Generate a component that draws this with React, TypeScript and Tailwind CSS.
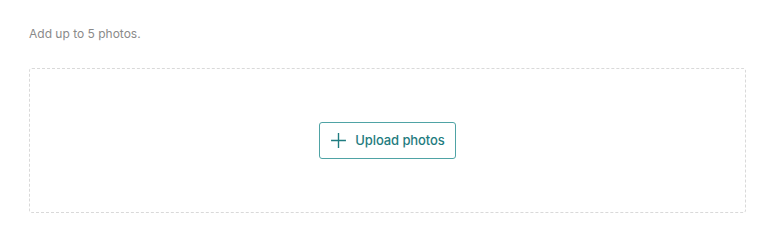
const App = () => {
  return (
    <div className="min-h-[241px] bg-white pl-[29px] pr-[22px] pt-[26px] font-['Inter','Liberation_Sans',sans-serif]">
      <p className="text-[12px] leading-4 text-[#8a8a8a]">Add up to 5 photos.</p>
      <div className="mt-[26px] flex h-[145px] items-center justify-center rounded-[3px] border border-dashed border-[#d9d9d9]">
        <button className="flex h-[37px] w-[137px] items-center justify-center gap-[8px] rounded-[3px] border border-[#4fa3a5] bg-white text-[13px] font-medium tracking-[-0.1px] text-[#1f7c80]">
          <svg width="17" height="17" viewBox="0 0 16 16" fill="none" stroke="currentColor" strokeWidth="1.3">
            <path d="M8 1v14M1 8h14" />
          </svg>
          Upload photos
        </button>
      </div>
    </div>
  );
};

export default App;
